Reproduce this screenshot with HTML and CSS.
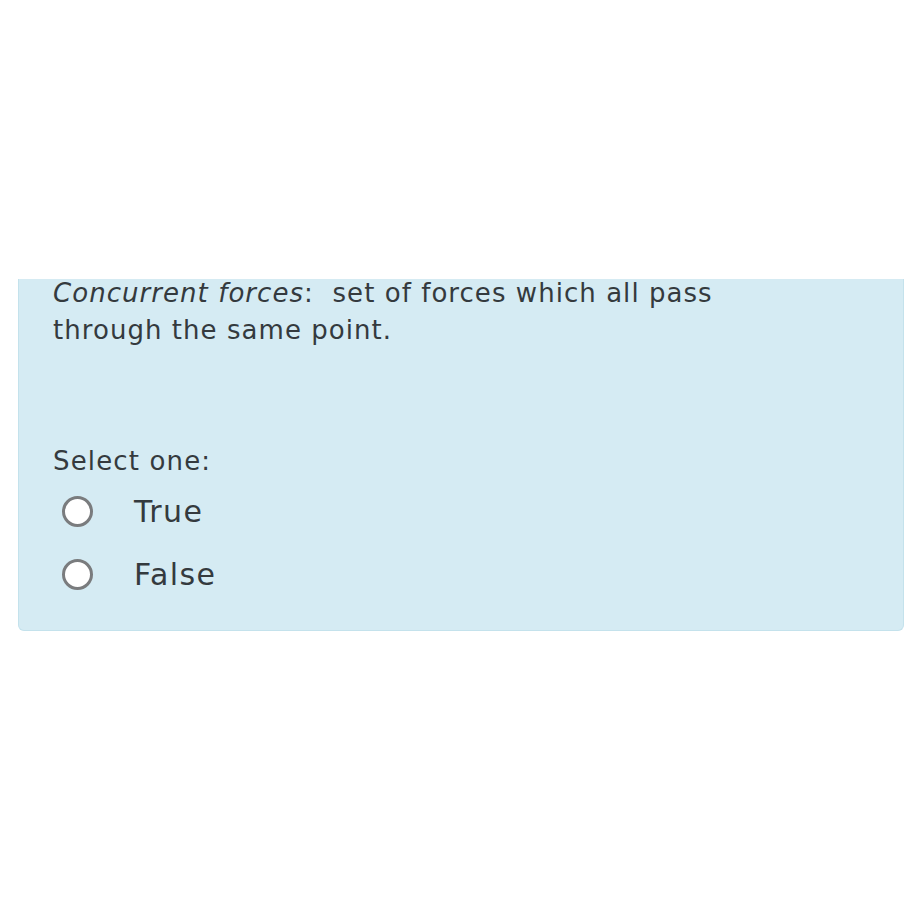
FILE: index.html
```html
<!DOCTYPE html>
<html>
<head>
<meta charset="utf-8">
<link rel="stylesheet" href="styles.css">
</head>
<body>
<div class="page">
  <div class="question">
    <p class="qtext"><em>Concurrent forces</em>:&nbsp; set of forces which all pass<br>through the same point.</p>
    <div class="prompt">Select one:</div>
    <div class="answer">
      <label class="option"><span class="radio"></span><span class="label">True</span></label>
      <label class="option"><span class="radio"></span><span class="label">False</span></label>
    </div>
  </div>
</div>
</body>
</html>
```
FILE: styles.css
```css
html, body {
  margin: 0;
  padding: 0;
  background: #ffffff;
}
.page {
  width: 922px;
  height: 922px;
  padding-top: 279px;
  box-sizing: border-box;
}
.question {
  margin-left: 18px;
  width: 886px;
  height: 352px;
  box-sizing: border-box;
  background: #d5ebf3;
  border: 1px solid #c4e2ec;
  border-top: none;
  border-radius: 0 0 6px 6px;
  padding: 0 0 0 34px;
  font-family: "DejaVu Sans", Verdana, sans-serif;
  color: #343a3e;
  overflow: hidden;
}
.qtext {
  margin: -4px 0 0 0;
  font-size: 26px;
  line-height: 37px;
  letter-spacing: 1.05px;
  white-space: nowrap;
}
.qtext em {
  font-style: italic;
}
.prompt {
  margin-top: 94px;
  font-size: 26px;
  line-height: 37px;
  letter-spacing: 1.15px;
}
.answer {
  display: flex;
  flex-direction: column;
  margin-top: 10px;
  gap: 21px;
}
.option {
  display: flex;
  align-items: center;
  height: 42px;
}
.radio {
  width: 31px;
  height: 31px;
  box-sizing: border-box;
  border: 3px solid #7a7c7e;
  border-radius: 50%;
  background: #ffffff;
  margin-left: 9px;
}
.label {
  margin-left: 41px;
  font-size: 30px;
  letter-spacing: 1.4px;
}
```
